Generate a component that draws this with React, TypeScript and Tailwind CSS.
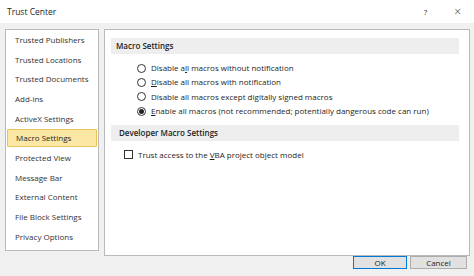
import { useState } from 'react';

const navItems = [
  'Trusted Publishers',
  'Trusted Locations',
  'Trusted Documents',
  'Add-ins',
  'ActiveX Settings',
  'Macro Settings',
  'Protected View',
  'Message Bar',
  'External Content',
  'File Block Settings',
  'Privacy Options',
];

const Radio = ({ checked }: { checked: boolean }) => (
  <span className="w-[9px] h-[9px] rounded-full border border-[#333] bg-white flex items-center justify-center shrink-0">
    {checked && <span className="w-[5px] h-[5px] rounded-full bg-[#222]" />}
  </span>
);

export default function App() {
  const [selected] = useState(3);

  const options = [
    <>Disable a<u>l</u>l macros without notification</>,
    <><u>D</u>isable all macros with notification</>,
    <>Disable all macros except di<u>g</u>itally signed macros</>,
    <><u>E</u>nable all macros (not recommended; potentially dangerous code can run)</>,
  ];

  return (
    <div
      className="w-[474px] h-[276px] bg-[#f0f0f0] text-[#1e1e1e] text-[8px] leading-none flex flex-col overflow-hidden"
      style={{ fontFamily: '"Open Sans", "Noto Sans", sans-serif' }}
    >
      {/* 타이틀 바 */}
      <div className="h-[23px] bg-white flex items-center pl-[7px] pr-[13px] shrink-0">
        <span className="text-[8.5px] mt-[2px]">Trust Center</span>
        <span className="ml-auto text-[8px] text-[#333]">?</span>
        <span className="ml-[27px] text-[12px] font-light text-[#333]">×</span>
      </div>

      {/* 본문 */}
      <div className="flex gap-[5px] pl-[5px] pt-[6px]">
        <div className="w-[94px] h-[222px] bg-white border border-[#b9b9b9] flex flex-col">
          {navItems.map((item) =>
            item === 'Macro Settings' ? (
              <div key={item} className="h-[19.7px] flex items-center px-px">
                <div className="w-full h-[18px] bg-[#fce8a4] border border-[#eac25a] rounded-[1px] flex items-center pl-[8px]">
                  {item}
                </div>
              </div>
            ) : (
              <div key={item} className="h-[19.7px] flex items-center pl-[9px] text-[#333]">
                {item}
              </div>
            )
          )}
        </div>

        <div className="w-[366px] h-[227px] bg-white border border-[#b9b9b9] flex flex-col pl-[6px] pr-[10px] pt-[8px]">
          <div className="h-[16px] bg-[#eeeeee] flex items-center pl-[5px] font-semibold text-[#222]">
            Macro Settings
          </div>
          <div className="flex flex-col pl-[26px] pt-[7px]">
            {options.map((o, i) => (
              <div key={i} className="h-[14.3px] flex items-center gap-[5px]">
                <Radio checked={i === selected} />
                <span>{o}</span>
              </div>
            ))}
          </div>
          <div className="h-[16px] bg-[#eeeeee] flex items-center pl-[8px] mt-[7px] font-semibold text-[#222]">
            Developer Macro Settings
          </div>
          <div className="flex items-center gap-[5px] pl-[13px] mt-[9px]">
            <span className="w-[9px] h-[9px] border border-[#333] bg-white shrink-0" />
            <span>
              Trust access to the <u>V</u>BA project object model
            </span>
          </div>
        </div>
      </div>

      {/* 버튼 */}
      <div className="flex justify-end gap-[3px] pr-[7px]">
        <button className="w-[54px] h-[13px] bg-[#e1e1e1] border border-[#0078d7] flex items-center justify-center text-[8px]">
          OK
        </button>
        <button className="w-[57px] h-[13px] bg-[#e1e1e1] border border-[#adadad] flex items-center justify-center text-[8px]">
          Cancel
        </button>
      </div>
    </div>
  );
}
